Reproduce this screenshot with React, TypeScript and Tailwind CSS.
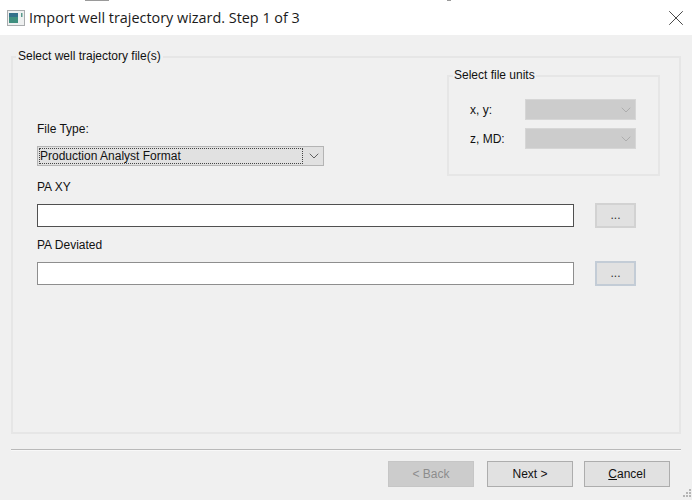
import { ChevronDown, X } from "lucide-react";

function UnitRow({ label }: { label: string }) {
  return (
    <div className="flex items-center h-[21px]">
      <span className="w-[55px] text-[#111]">{label}</span>
      <div className="w-[111px] h-[21px] bg-[#cccccc] border border-[#d6d6d6] flex items-center justify-end pr-[1px]">
        <ChevronDown className="w-[16px] h-[16px] text-[#adadad]" strokeWidth={1.5} />
      </div>
    </div>
  );
}

function FileRow({ label, focused }: { label: string; focused?: boolean }) {
  return (
    <div className="flex flex-col">
      <div className="h-[17px] leading-[17px] text-[#111]">{label}</div>
      <div className="flex items-center h-[25px] mt-[7px]">
        <div className={`w-[537px] h-[23px] bg-white border ${focused ? "border-[#505050]" : "border-[#8e8e8e]"}`} />
        <button className={`ml-[21px] w-[41px] h-[25px] bg-[#e1e1e1] border-2 leading-[19px] text-[#333] ${focused ? "border-[#d2d2d2]" : "border-[#c3ccd6]"}`}>
          ...
        </button>
      </div>
    </div>
  );
}

function WizardButton({ children, disabled }: { children: React.ReactNode; disabled?: boolean }) {
  return (
    <button
      className={`w-[86px] h-[26px] border text-center ${
        disabled ? "bg-[#cccccc] border-[#c6c6c6] text-[#8c8c8c]" : "bg-[#e1e1e1] border-[#adadad] text-[#111]"
      }`}
    >
      {children}
    </button>
  );
}

export default function App() {
  return (
    <div className="relative w-[692px] h-[500px] bg-[#f0f0f0] text-[12px] overflow-hidden flex flex-col" style={{ fontFamily: '"Liberation Sans", Arial, sans-serif' }}>
      {/* Title bar */}
      <div className="h-[35px] bg-white flex items-center pl-[7px] pr-[3px] shrink-0">
        <svg width="18" height="16" viewBox="0 0 18 16" className="shrink-0">
          <rect x="0.5" y="0.5" width="17" height="15" fill="#eef0f0" stroke="#a9acae" />
          <rect x="2" y="3" width="9" height="10" fill="#3f8f7f" />
          <rect x="2" y="3" width="9" height="4" fill="#33708a" />
          <rect x="14" y="3" width="1.5" height="4" fill="#5a9a8c" />
        </svg>
        <span className="ml-[4px] text-[14.4px] text-[#1a1a1a] leading-[20px]" style={{ fontFamily: '"Open Sans", sans-serif' }}>
          Import well trajectory wizard. Step 1 of 3
        </span>
        <X className="ml-auto w-[26px] h-[26px] text-[#444]" strokeWidth={0.9} />
      </div>

      {/* Scraps of the window behind, cut by the screenshot's top edge */}
      <div className="absolute top-0 left-[85px] w-[24px] h-[1px] bg-[#9a9a9a]" />
      <div className="absolute top-0 left-[447px] w-[4px] h-[1px] bg-[#9a9a9a]" />

      {/* Main group */}
      <div className="relative mt-[21px] ml-[11px] w-[670px] h-[378px] border-2 border-[#e6e6e6] pl-[24px]">
        <span className="absolute left-[3px] -top-[9px] bg-[#f0f0f0] px-[2px] leading-[14px] text-[#111]">Select well trajectory file(s)</span>

        <div className="flex justify-between pt-[17px] pr-[19px]">
          <div className="flex flex-col justify-end pb-[10px]">
            <div className="h-[17px] leading-[17px] text-[#111]">File Type:</div>
            <div className="relative mt-[8px] w-[287px] h-[20px] bg-[#e1e1e1] border border-[#b4b4b4] flex items-center">
              <div className="ml-[1px] w-[264px] h-[16px] border border-dotted border-[#444] leading-[14px] text-[#111]">
                Production Analyst Format
              </div>
              <ChevronDown className="ml-[3px] w-[16px] h-[16px] text-[#606060]" strokeWidth={1.5} />
            </div>
          </div>

          <div className="relative w-[213px] h-[101px] border-2 border-[#e6e6e6] pl-[21px] pt-[22px]">
            <span className="absolute left-[4px] -top-[9px] bg-[#f0f0f0] px-[1px] leading-[14px] text-[#111]">Select file units</span>
            <div className="flex flex-col gap-[8px]">
              <UnitRow label="x, y:" />
              <UnitRow label="z, MD:" />
            </div>
          </div>
        </div>

        <div className="flex flex-col gap-[9px] mt-[3px]">
          <FileRow label="PA XY" focused />
          <FileRow label="PA Deviated" />
        </div>
      </div>

      {/* Footer */}
      <div className="mt-[15px] mx-[11px] h-[1px] bg-[#b9b9b9] shadow-[0_1px_0_#f8f8f8]" />
      <div className="flex justify-end mt-[11px] pr-[22px]">
        <WizardButton disabled>&lt; Back</WizardButton>
        <div className="w-[13px]" />
        <WizardButton>Next &gt;</WizardButton>
        <div className="w-[11px]" />
        <WizardButton><span className="underline">C</span>ancel</WizardButton>
      </div>

      {/* Resize grip */}
      <svg width="12" height="12" viewBox="0 0 12 12" className="absolute right-0 bottom-0">
        {[[9, 1], [6, 4], [9, 4], [3, 7], [6, 7], [9, 7]].map(([x, y]) => (
          <rect key={`${x}-${y}`} x={x} y={y} width="2" height="2" fill="#b5b5b5" />
        ))}
      </svg>
    </div>
  );
}
